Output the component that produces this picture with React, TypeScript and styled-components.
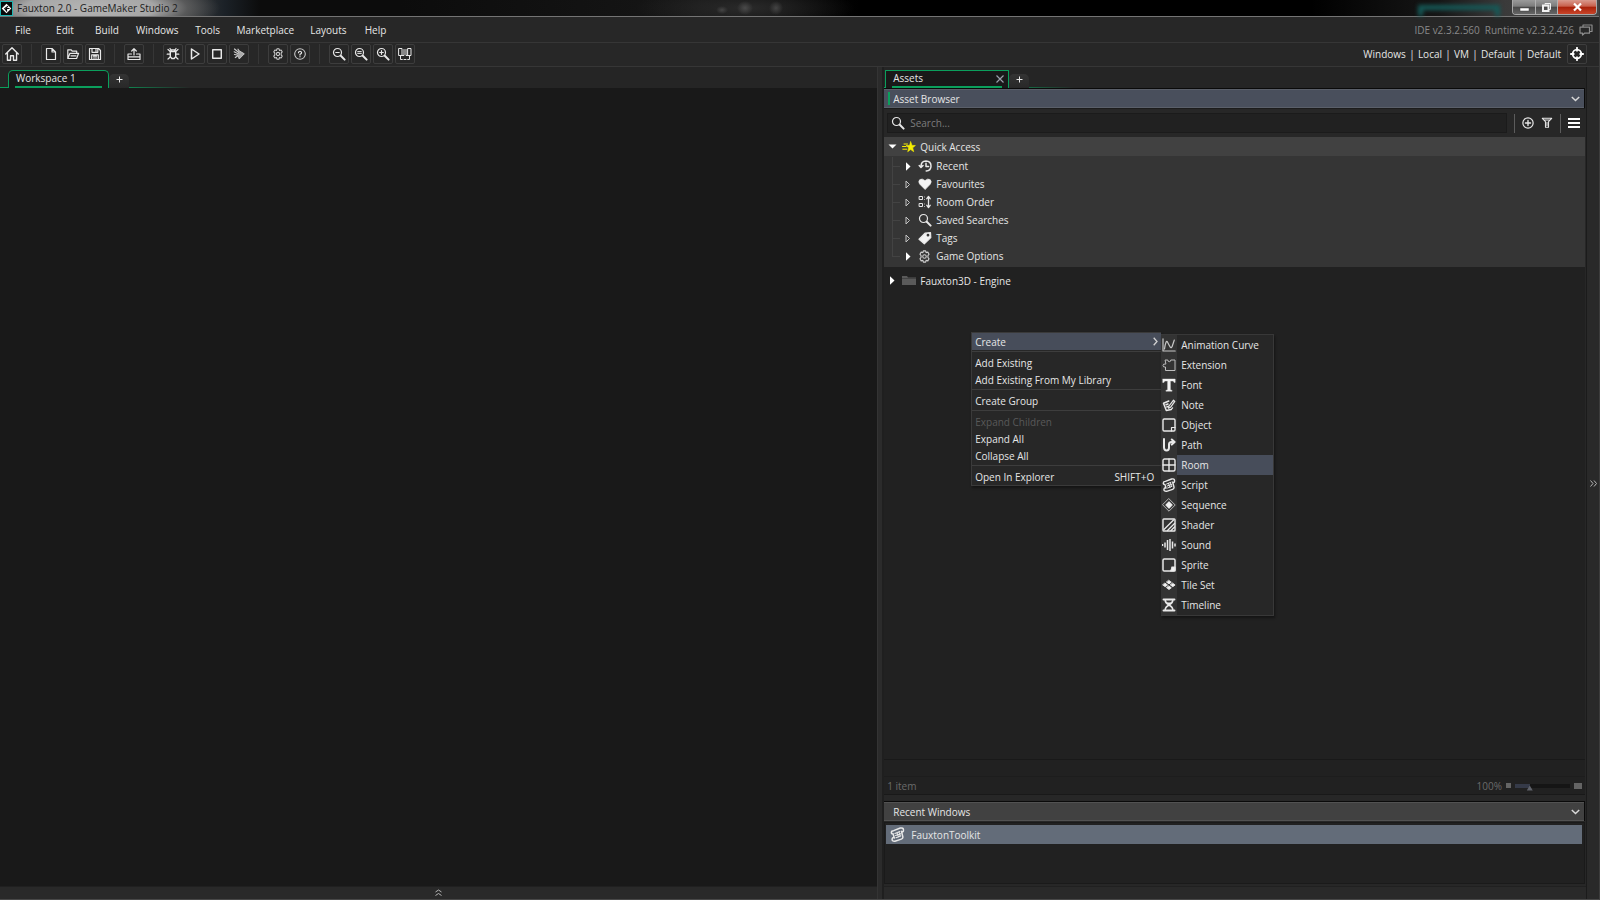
import React from "react";
import styled, { createGlobalStyle, css } from "styled-components";

const GlobalStyle = createGlobalStyle`
  * { box-sizing: border-box; }
  html, body { margin: 0; background: #272727; }
  body, button, input {
    font-family: "Open Sans", "Noto Sans", sans-serif;
    font-size: 10px;
    line-height: 14px;
    color: #e6e6e6;
  }
  button { margin: 0; padding: 0; border: 0; background: none; text-align: left; white-space: nowrap; }
  svg { display: block; flex: none; }
`;

const green = "#0b9f5c";

const Shell = styled.div`
  min-height: 100vh;
  display: flex;
  flex-direction: column;
  background: #272727;
  border-right: 1px solid #3c3c3c;
  border-bottom: 1px solid #484848;
  overflow: hidden;
`;

/* ---------- title bar ---------- */

const TitleBar = styled.header`
  height: 17px;
  display: flex;
  align-items: center;
  gap: 4px;
  padding-right: 2px;
  border-bottom: 1px solid #747474;
  background:
    radial-gradient(ellipse 130px 30px at 90px 8px, #b4b4b4 0%, #a6a6a6 50%, rgba(110, 110, 110, 0.6) 75%, transparent 100%),
    radial-gradient(ellipse 6px 4px at 722px 10px, #444, transparent),
    radial-gradient(ellipse 8px 7px at 745px 8px, #4a4a4a, transparent),
    radial-gradient(ellipse 7px 7px at 776px 8px, #444, transparent),
    radial-gradient(ellipse 110px 22px at 745px 8px, #2a2a2a, transparent),
    linear-gradient(90deg, #666 0, #444 170px, #1b2127 225px, #0c0c0c 260px, #0c0c0c 400px, #161616 700px, #000 860px, #000 82%, #161616 90%, #3a3a3a 94%, #444 100%);
`;
const TitleText = styled.h1`
  margin: 0;
  flex: 1;
  font-size: 10px;
  line-height: 16px;
  font-weight: 400;
  color: #1c1c1c;
`;
const TealGlow = styled.div`
  align-self: flex-end;
  width: 82px;
  height: 11px;
  margin-right: 8px;
  border: 5px solid #155a58;
  border-bottom: 0;
  filter: blur(2px);
`;
const WindowButtons = styled.div`
  align-self: flex-start;
  display: flex;
  height: 15px;
  border: 1px solid #a9a9a9;
  border-top: 0;
  border-radius: 0 0 4px 4px;
  overflow: hidden;
`;
const WindowButton = styled.button<{ $wide?: boolean; $close?: boolean }>`
  width: ${(p) => (p.$wide ? 39 : 22)}px;
  display: grid;
  place-items: center;
  background: ${(p) =>
    p.$close
      ? "linear-gradient(#d99a8d 0, #c8604c 45%, #a82008 50%, #c8452a 100%)"
      : "linear-gradient(#9a9a9a 0, #7c7c7c 45%, #484848 50%, #666 100%)"};
  & + & { border-left: 1px solid #b0b0b0; }
`;

/* ---------- menu and tool bars ---------- */

const Bar = styled.div<{ $h: number; $lift?: boolean }>`
  height: ${(p) => p.$h}px;
  display: flex;
  align-items: center;
  padding-left: 2px;
  padding-bottom: ${(p) => (p.$lift ? 1 : 0)}px;
  border-bottom: 1px solid #363636;
  background: #272727;
`;
const MenuButton = styled.button`
  min-width: 42px;
  padding: 0 8px;
  text-align: center;
`;
const Push = styled.div<{ $gap: number; $end: number }>`
  margin-left: auto;
  display: flex;
  align-items: center;
  gap: ${(p) => p.$gap}px;
  padding-right: ${(p) => p.$end}px;
`;
const Version = styled.span`
  color: #898989;
`;
const Pipe = styled.span`
  width: 6px;
  text-align: center;
`;
const ToolGroup = styled.div`
  display: flex;
  gap: 2px;
  & + & { margin-left: 9px; padding-left: 9px; border-left: 1px solid #363636; }
`;
const ToolButton = styled.button`
  width: 20px;
  height: 20px;
  display: grid;
  place-items: center;
  border: 1px solid #3d3d3d;
  border-radius: 2px;
`;
const TargetButton = styled(ToolButton)`
  margin-left: 3px;
`;

/* ---------- docking area ---------- */

const Main = styled.main`
  flex: 1;
  display: grid;
  grid-template-columns: minmax(0, 5fr) 7px minmax(0, 4fr) 13px;
`;
const Workspace = styled.section`
  display: flex;
  flex-direction: column;
  background: #191919;
`;
const Splitter = styled.div`
  background: #2b2b2b;
  border-left: 1px solid #343434;
  border-right: 2px solid #1f1f1f;
`;
const Strip = styled.div<{ $side?: boolean }>`
  display: grid;
  place-items: center;
  background: #292929;
  ${(p) =>
    p.$side
      ? css`border-left: 1px solid #1b1b1b;`
      : css`height: 13px; padding-bottom: 2px; border-top: 1px solid #202020;`}
`;
const IconButton = styled.button`
  display: grid;
  place-items: center;
`;
const Tabs = styled.div<{ $inset: number }>`
  height: 21px;
  display: flex;
  align-items: flex-end;
  padding-left: ${(p) => p.$inset}px;
  background:
    linear-gradient(90deg, ${green} 0, ${green} 110px, transparent 190px) bottom left / 100% 1px no-repeat,
    #252525;
`;
const Tab = styled.div<{ $w: number; $round: number }>`
  width: ${(p) => p.$w}px;
  height: 18px;
  display: flex;
  align-items: flex-start;
  justify-content: space-between;
  padding: 0 4px 0 7px;
  border: 1px solid ${green};
  border-bottom: 0;
  border-radius: ${(p) => p.$round}px ${(p) => p.$round}px 0 0;
  background: linear-gradient(${green}, ${green}) 6px 100% / calc(100% - 12px) 2px no-repeat, #191919;
`;
const TabName = styled.button`
  line-height: 15px;
`;
const TabClose = styled(IconButton)`
  height: 15px;
`;
const AddTab = styled.button`
  width: 20px;
  height: 14px;
  padding-bottom: 3px;
  display: grid;
  place-items: center;
  background: linear-gradient(#333, #282828);
  border-radius: 5px 5px 0 0;
`;

/* ---------- asset panel ---------- */

const Side = styled.aside`
  position: relative;
  display: flex;
  flex-direction: column;
  background: #272727;
`;
const SectionHeader = styled.button<{ $active?: boolean }>`
  height: 20px;
  display: flex;
  align-items: center;
  gap: 3px;
  margin-right: 1px;
  padding: 0 4px;
  border: 1px solid #0a0a0a;
  border-width: 1px 1px 0 0;
  background: ${(p) => (p.$active ? "#494f5c" : "#414141")};
  box-shadow: inset 0 1px 0 ${(p) => (p.$active ? "#5a5f69" : "#525252")}, inset 0 -1px 0 ${(p) => (p.$active ? "#5a5f69" : "#525252")};
`;
const ActiveMark = styled.span<{ $on?: boolean }>`
  width: 2px;
  height: 13px;
  background: ${(p) => (p.$on ? green : "transparent")};
`;
const Grow = styled.span`
  flex: 1;
`;
const SearchRow = styled.div`
  height: 29px;
  display: flex;
  align-items: center;
  gap: 7px;
  margin-right: 1px;
  padding: 0 5px 0 3px;
  border-top: 1px solid #1c1c1c;
`;
const SearchBox = styled.label`
  flex: 1;
  height: 20px;
  display: flex;
  align-items: center;
  gap: 5px;
  padding-left: 3px;
  background: #212121;
  border: 1px solid #1b1b1b;
`;
const SearchInput = styled.input`
  flex: 1;
  min-width: 0;
  padding: 0;
  border: 0;
  outline: 0;
  background: none;
  &::placeholder { color: #7d7d7d; opacity: 1; }
`;
const Rule = styled.span`
  width: 1px;
  height: 19px;
  background: #5c5c5c;
`;
const Tree = styled.div`
  flex: 1;
  margin-right: 1px;
  background: #212121;
  border-bottom: 1px solid #191919;
`;
const TreeRow = styled.button<{ $lit?: boolean }>`
  width: 100%;
  height: 19px;
  display: grid;
  grid-template-columns: 10px 14px auto;
  justify-content: start;
  align-items: center;
  column-gap: 4px;
  padding-left: 4px;
  background: ${(p) => (p.$lit ? "#414141" : "none")};
`;
const Branch = styled.div`
  margin-bottom: 4px;
  padding: 1px 0 2px 8px;
  background: #353535;
`;
const Leaf = styled.button`
  width: 100%;
  height: 18px;
  display: grid;
  grid-template-columns: 8px 10px 14px auto;
  justify-content: start;
  align-items: center;
  column-gap: 4px;
  background: linear-gradient(#434343, #434343) 0 0 / 1px 100% no-repeat;
  &:last-child { background-size: 1px 9px; }
`;
const Twig = styled.span`
  height: 1px;
  background: #434343;
`;
const Spacer = styled.div`
  height: 17px;
  margin-right: 1px;
  background: #212121;
  border-bottom: 1px solid #1d1d1d;
`;
const StatusBar = styled.div`
  height: 18px;
  display: flex;
  align-items: center;
  gap: 4px;
  margin: 0 1px 6px 0;
  padding: 0 3px;
  background: #212121;
  border-bottom: 1px solid #191919;
`;
const Dim = styled.span<{ $fill?: boolean }>`
  flex: ${(p) => (p.$fill ? 1 : "none")};
  color: #6b6b6b;
`;
const Box = styled.span<{ $w: number; $h: number }>`
  width: ${(p) => p.$w}px;
  height: ${(p) => p.$h}px;
  background: #646464;
`;
const Zoom = styled.input`
  width: 55px;
  height: 10px;
  margin: 0;
  appearance: none;
  background: linear-gradient(90deg, #353a48 15px, #151515 15px) 0 3px / 100% 4px no-repeat;
  &::-webkit-slider-thumb {
    appearance: none;
    width: 6px;
    height: 5px;
    margin-top: 5px;
    background: #60636b;
    clip-path: polygon(50% 0, 100% 100%, 0 100%);
  }
`;
const RecentList = styled.div`
  height: 62px;
  margin: 1px 1px 2px 0;
  padding: 2px 2px 2px 1px;
  background: #212121;
  border: 1px solid #1a1a1a;
`;
const RecentItem = styled.button`
  width: 100%;
  height: 19px;
  display: flex;
  align-items: center;
  gap: 6px;
  padding-left: 4px;
  background: #636c79;
`;

/* ---------- context menus ---------- */

const Popup = styled.div`
  position: absolute;
  left: 87px;
  top: 265px;
  display: flex;
  align-items: flex-start;
`;
const Menu = styled.div`
  width: 190px;
  background: #272727;
  border: 1px solid #3a3a3a;
  border-right: 0;
  box-shadow: 1px 2px 2px #151515;
`;
const MenuItem = styled.button<{ $lit?: boolean }>`
  width: 100%;
  height: 17px;
  display: flex;
  align-items: center;
  justify-content: space-between;
  padding: 0 ${(p) => (p.$lit ? 3 : 7)}px 0 3px;
  background: ${(p) => (p.$lit ? "#474d5a" : "none")};
  &:disabled { color: #595959; }
`;
const Divider = styled.hr`
  height: 1px;
  margin: 1px 0 2px;
  border: 0;
  background: #3d3d3d;
`;
const SubMenu = styled.div`
  width: 113px;
  margin-top: 2px;
  background: linear-gradient(90deg, #333 16px, #272727 16px);
  border: 1px solid #383838;
  border-left: 0;
  box-shadow: 1px 2px 2px #151515;
`;
const SubItem = styled.button`
  width: 100%;
  height: 20px;
  display: grid;
  grid-template-columns: 14px 1fr;
  column-gap: 1px;
  align-items: center;
  padding-left: 1px;
`;
const SubName = styled.span<{ $lit?: boolean }>`
  padding-left: 4px;
  line-height: 20px;
  background: ${(p) => (p.$lit ? "#474d5a" : "none")};
`;

/* ---------- drawings ---------- */

type SvgProps = { children: React.ReactNode; size?: number; sw?: number; color?: string };
const Svg = ({ children, size = 14, sw = 1.2, color = "#e8e8e8" }: SvgProps) => (
  <svg width={size} height={size} viewBox="0 0 14 14" fill="none" stroke={color} strokeWidth={sw} strokeLinejoin="round" strokeLinecap="round" aria-hidden="true">
    {children}
  </svg>
);

const f = "#f4f4f4";
const gear = (
  <>
    <path d="M5.800 1h2.400l.5 1.800 1.900-.5 1.300 2.200L10.700 6v2l1.200 1.500-1.300 2.200-1.900-.5L8.200 13H5.800l-.5-1.800-1.900.5L2.100 9.500 3.300 8V6L2.100 4.500l1.300-2.200 1.900.5z" stroke="#cfcfcf" />
    <circle cx="7" cy="7" r="1.900" stroke="#cfcfcf" />
  </>
);
const lens = (
  <>
    <circle cx="5.500" cy="5.500" r="4" />
    <path d="M8.800 8.800L12.600 12.600" strokeWidth="2" />
  </>
);
const scroll = (
  <>
    <path d="M3.400 3.400L9.600 1Q12.600 .4 12.600 2.800T10.700 4L12 9.200Q12.200 10.800 10.600 11.300L4.600 13.300Q1.600 13.400 2 11.200T4 10.200L2.900 6.400Q1.200 6.600 1.300 5T3.400 3.400z" strokeWidth="1.400" />
    <path d="M4.600 6l4.500-1.800M5.200 8l4.800-1.800M5.600 10l4.400-1.700M6.500 5.400l1.500 4M8.500 5l1 3.500" strokeWidth="1" />
  </>
);

const icons: Record<string, React.ReactNode> = {
  Home: <path d="M1.500 7L7 1.500 12.500 7M3 6v6.500h2.700V8.500h2.600v4H11V6" />,
  "New project": <path d="M2.500 1.500h5.500l3.500 3.500v7.500h-9zM8 1.700V5h3.300" />,
  "Open project": <path d="M1.800 11.500V2.800h3.400l1 1.400h4.500v2M1.800 11.500L4 6.300h8.600l-2 5.200zM5 8.800h5" />,
  "Save project": (
    <>
      <path d="M1.500 1.500h9l2 2v9h-11zM4 2v3.300h5.800V2M3.700 12V7.800h6.600V12M5.500 9.200h3M5.500 11h3" />
      <path d="M8 2.500v2" />
    </>
  ),
  "Create executable": <path d="M1 7v5.500h12V7H9.500M1 7h3.500M1 9.800h12M7 8V2M4.700 4L7 1.600 9.300 4" />,
  Debug: (
    <>
      <path d="M4.300 4.600h5.400v5L8.200 11.500H5.800L4.300 9.600zM4.300 4.600L5.500 3h3l1.200 1.600" strokeWidth="1.400" />
      <path d="M1.200 7.200h2.600M10.200 7.200h2.600M2 2.500l2.300 2M12 2.500l-2.300 2M2 12l2.300-2M12 12l-2.300-2M4 1.500l1 1.500M10 1.500L9 3" />
    </>
  ),
  Run: <path d="M3.500 2v10l7.500-5z" strokeWidth="1.500" />,
  Stop: <rect x="2" y="2" width="10" height="10" strokeWidth="1.700" />,
  Clean: (
    <>
      <path d="M7.500 4L12.300 6.800 7.200 12 6 8.500z" fill="#aaa" stroke="#ccc" strokeWidth=".9" />
      <path d="M2.500 2l4 3.200M2.200 4.800l3.300 1.700M2.500 7.500l2.800.5M3.300 10.500l2.200-1.500M6 2.200l.8 1.300" stroke="#ccc" />
    </>
  ),
  Settings: gear,
  Help: (
    <>
      <circle cx="7" cy="7" r="6.200" stroke="#cfcfcf" />
      <path d="M5.200 5.500Q5.400 3.800 7 3.800T8.800 5.400Q8.800 6.400 7 7.400v.8M7 10v.3" strokeWidth="1.400" />
    </>
  ),
  "Zoom out": <>{lens}<path d="M3.800 5.500h3.400" /></>,
  "Reset zoom": <>{lens}<path d="M3.700 4.600h3.600M3.700 6.400h3.600" strokeWidth="1" /></>,
  "Zoom in": <>{lens}<path d="M3.700 5.500h3.600M5.500 3.700v3.600" /></>,
  Dock: <path d="M1 1.500h3v7H1zM10 1.500h3v7h-3zM4 8.500h2v-6M10 8.500H8v-6M2.500 9v3.500h1.800M11.500 9v3.500H9.700M6 12.500h2" strokeWidth="1" />,
  Recent: <path d="M1.200 6.500l1.800 2 2-2M3 8Q2.800 2 8 2q5 .3 5 5t-4.800 5M8 4.200V7.500h2.600" strokeWidth="1.500" />,
  Favourites: <path d="M7 12.500L1.500 7Q-.2 4.500 1.800 2.600 4.300 .8 7 3.600 9.700 .8 12.200 2.600 14.200 4.500 12.500 7z" fill={f} strokeWidth="0.500" />,
  "Room Order": (
    <>
      <path d="M1.500 1.500h3v3h-3zM1.500 8.500h3v3h-3z" strokeWidth="1" />
      <path d="M6.500 1.500v1M6.500 4v1M6.500 8.500v1M6.500 11v1" strokeWidth="1" stroke="#aaa" strokeLinecap="butt" />
      <path d="M10.500 2v10M8.800 3.700l1.700-2.200 1.700 2.200M8.800 10.300l1.700 2.200 1.700-2.200" strokeWidth="1.300" />
    </>
  ),
  "Saved Searches": lens,
  Tags: (
    <>
      <path d="M1 8.200L7 2.200 12.500 1.500 12.800 6.500 6.300 12.800z" fill={f} />
      <circle cx="10" cy="4.200" r=".8" fill="#353535" stroke="#353535" />
    </>
  ),
  "Game Options": gear,
  "Animation Curve": <path d="M1 .8V13H13.200M2.500 11Q4 1 5.600 4.200T8.300 9.200Q9.600 10.800 10.800 6.500L12.300 2" stroke="#c8c8c8" />,
  Extension: <path d="M3.500 2h2.300q0 1.700 1.500 1.700T8.800 2H13v10.500H3.500V9Q1 9.500 1 7.500T3.500 6z" stroke="#bdbdbd" strokeWidth="1" />,
  Font: <path d="M.8 1h12.400v3.400h-1.200l-.7-1.300H8.400v8.700l1.700.6v.8H3.900v-.8l1.700-.6V3.100H2.700L2 4.400H.8z" fill={f} strokeWidth=".4" />,
  Note: (
    <>
      <path d="M6.800 3L1.500 5.300 4.300 12.600 9.300 11.400M4 6.800l2-.8M4.800 9l1.500-.6" strokeWidth="1.500" />
      <path d="M7 8L11.500 2.200 12.800 3.400 8.500 9.300 6.500 10.200zM9.300 11.400l1.300-1.600" strokeWidth="1.200" />
    </>
  ),
  Object: <><rect x="1" y="1" width="12" height="12" rx="1.200" strokeWidth="1.400" /><path d="M13 9.500H9.500V13" /></>,
  Path: <path d="M2 1v8.500Q2.200 12.500 4.600 12.500T7 9.500V6.500Q7 4 9.500 4h2.800M9.800 1.500L12.600 4 9.800 6.600" strokeWidth="2" />,
  Room: <><rect x="1" y="1" width="12" height="12" rx="1.500" strokeWidth="1.400" /><path d="M7 1v12M1 7h12" strokeWidth="1.400" /></>,
  Script: scroll,
  Sequence: <><path d="M7 .8L13.200 7 7 13.200 .8 7z" strokeWidth="1" stroke="#b8b8b8" /><path d="M7 4L10 7 7 10 4 7z" fill={f} /></>,
  Shader: <><rect x="1" y="1" width="12" height="12" rx=".8" strokeWidth="1.400" /><path d="M2 11.500L11.500 2M5.500 12.500l7-7M9 12.500l3.500-3.500" strokeWidth="1.300" /></>,
  Sound: <path d="M.5 6v2M3 4.500v5M5.500 2v10M8 1v12M10.500 3.500v7M13 5.500v3" strokeWidth="1.500" strokeLinecap="butt" />,
  Sprite: <><rect x="1" y="1" width="12" height="12" rx="1.300" strokeWidth="1.500" /><path d="M13 9H9.800v1.300L8.700 13H13z" fill={f} /></>,
  "Tile Set": <path d="M7 2.500l2.300 1.700L7 5.900 4.700 4.200zM7 8.100l2.300 1.700L7 11.500 4.700 9.800zM3.200 5.300L5.500 7 3.200 8.700 .9 7zM10.800 5.300L13.100 7l-2.300 1.700L8.500 7z" fill={f} strokeWidth=".9" />,
  Timeline: <><path d="M1.500 1.500h11M1.500 12.500h11" strokeWidth="1.900" /><path d="M3.200 2Q3.200 5 7 7 3.200 9 3.200 12M10.800 2Q10.800 5 7 7q3.800 2 3.800 5" strokeWidth="1.600" /><path d="M4.500 4.500h5L7 6.500z" fill={f} stroke="none" /></>,
};

const sizes: Record<string, number> = { Home: 16, Settings: 12, Help: 12, Stop: 12 };

const Arrow = ({ kind }: { kind: "down" | "right" | "hollow" }) => (
  <svg width="9" height="9" viewBox="0 0 9 9" aria-hidden="true">
    {kind === "down" && <path d="M.5 2.500h8L4.500 6.500z" fill="#fff" />}
    {kind === "right" && <path d="M2 .3v8.400L6.500 4.500z" fill="#fff" />}
    {kind === "hollow" && <path d="M2 1v7L5.500 4.500z" fill="none" stroke="#c4c4c4" />}
  </svg>
);
const Chevron = () => (
  <svg width="9" height="6" viewBox="0 0 9 6" fill="none" stroke="#d8d8d8" strokeWidth="1.500" aria-hidden="true">
    <path d="M.8 1L4.500 4.500 8.200 1" />
  </svg>
);
const Plus = () => (
  <svg width="7" height="7" viewBox="0 0 7 7" stroke="#e8e8e8" aria-hidden="true">
    <path d="M3.500.5v6M.5 3.500h6" />
  </svg>
);
const Logo = () => (
  <svg width="13" height="15" viewBox="0 0 13 15" aria-hidden="true">
    <rect x=".5" y=".5" width="12" height="14" fill="#0a0a0a" stroke="#1fb5b2" />
    <path d="M6.500 2.800L11.300 7.500 6.500 12.200 1.700 7.500z" fill="#fff" />
    <path d="M8 5.200L4.800 7.500 6.500 9.600V7.500h3" fill="none" stroke="#0a0a0a" strokeWidth="1.200" />
  </svg>
);

/* ---------- data ---------- */

const menus = ["File", "Edit", "Build", "Windows", "Tools", "Marketplace", "Layouts", "Help"];
const tools = [
  ["Home"],
  ["New project", "Open project", "Save project"],
  ["Create executable"],
  ["Debug", "Run", "Stop", "Clean"],
  ["Settings", "Help"],
  ["Zoom out", "Reset zoom", "Zoom in", "Dock"],
];
const targets = ["Windows", "Local", "VM", "Default", "Default"];
const quickAccess: { name: string; filled?: boolean }[] = [
  { name: "Recent", filled: true },
  { name: "Favourites" },
  { name: "Room Order" },
  { name: "Saved Searches" },
  { name: "Tags" },
  { name: "Game Options", filled: true },
];
const resources = ["Animation Curve", "Extension", "Font", "Note", "Object", "Path", "Room", "Script", "Sequence", "Shader", "Sound", "Sprite", "Tile Set", "Timeline"];

export default function App() {
  return (
    <>
      <GlobalStyle />
      <Shell>
        <TitleBar>
          <Logo />
          <TitleText>Fauxton 2.0 - GameMaker Studio 2</TitleText>
          <TealGlow />
          <WindowButtons>
            <WindowButton aria-label="Minimize">
              <svg width="11" height="12" viewBox="0 0 11 12"><rect x="1" y="7" width="9" height="3" fill="#fff" stroke="#444" strokeWidth=".5" /></svg>
            </WindowButton>
            <WindowButton aria-label="Restore">
              <svg width="11" height="11" viewBox="0 0 11 11" fill="none" stroke="#f2f2f2"><path d="M4 2.500v-1h5.500v6h-1.500" /><rect x="2" y="3.500" width="5.500" height="5.500" strokeWidth="2" /></svg>
            </WindowButton>
            <WindowButton aria-label="Close" $wide $close>
              <svg width="11" height="10" viewBox="0 0 11 10" fill="none" stroke="#fff" strokeWidth="2.200"><path d="M2 1.500l7 7M9 1.500l-7 7" /></svg>
            </WindowButton>
          </WindowButtons>
        </TitleBar>

        <Bar as="nav" $h={26}>
          {menus.map((m) => <MenuButton key={m}>{m}</MenuButton>)}
          <Push $gap={5} $end={6}>
            <Version>IDE v2.3.2.560</Version>
            <Version>Runtime v2.3.2.426</Version>
            <IconButton aria-label="Notifications">
              <Svg color="#8c8c8c"><path d="M4 3.500V2h9v6.500h-2M1 4.200h9.500v6H5.500L3.500 12v-1.800H1z" /></Svg>
            </IconButton>
          </Push>
        </Bar>

        <Bar $h={24} $lift>
          {tools.map((group) => (
            <ToolGroup key={group[0]}>
              {group.map((t) => (
                <ToolButton key={t} aria-label={t}><Svg size={sizes[t] ?? 14}>{icons[t]}</Svg></ToolButton>
              ))}
            </ToolGroup>
          ))}
          <Push $gap={3} $end={12}>
            {targets.map((t, i) => (
              <React.Fragment key={i}>
                {i > 0 && <Pipe>|</Pipe>}
                <button>{t}</button>
              </React.Fragment>
            ))}
            <TargetButton aria-label="Target manager">
              <Svg sw={1.8} color="#fff"><circle cx="7" cy="7" r="4.300" /><path d="M7 .8v3M7 10.200v3M.8 7h3M10.200 7h3" /></Svg>
            </TargetButton>
          </Push>
        </Bar>

        <Main>
          <Workspace>
            <Tabs $inset={8}>
              <Tab $w={101} $round={5}><TabName>Workspace 1</TabName></Tab>
              <AddTab aria-label="Add workspace"><Plus /></AddTab>
            </Tabs>
            <Grow />
            <Strip>
              <IconButton aria-label="Show output">
                <svg width="7" height="7" viewBox="0 0 7 7" fill="none" stroke="#b4b4b4"><path d="M.5 3l3-2 3 2M.5 6.500l3-2 3 2" /></svg>
              </IconButton>
            </Strip>
          </Workspace>

          <Splitter />

          <Side>
            <Tabs $inset={1}>
              <Tab $w={124} $round={1}>
                <TabName>Assets</TabName>
                <TabClose aria-label="Close Assets">
                  <svg width="8" height="8" viewBox="0 0 8 8" stroke="#9a9fab" strokeWidth="1.200"><path d="M.5.5l7 7M7.500.5l-7 7" /></svg>
                </TabClose>
              </Tab>
              <AddTab aria-label="Add tab"><Plus /></AddTab>
            </Tabs>
            <SectionHeader $active>
              <ActiveMark $on />
              <Grow>Asset Browser</Grow>
              <Chevron />
            </SectionHeader>
            <SearchRow>
              <SearchBox>
                <Svg>{lens}</Svg>
                <SearchInput type="text" placeholder="Search..." aria-label="Search assets" />
              </SearchBox>
              <Rule />
              <IconButton aria-label="Add asset">
                <Svg size={12} sw={1.4}><circle cx="7" cy="7" r="6" /><path d="M7 4v6M4 7h6" strokeWidth="1.600" /></Svg>
              </IconButton>
              <IconButton aria-label="Filter">
                <Svg size={12}><path d="M1.500 1.500h11L8.800 5.500v6.500H5.200V5.500zM4 3.500h6M7 6v4" /></Svg>
              </IconButton>
              <Rule />
              <IconButton aria-label="Browser menu">
                <svg width="12" height="10" viewBox="0 0 12 10" fill="#fff"><path d="M0 0h12v2H0zM0 4h12v2H0zM0 8h12v2H0z" /></svg>
              </IconButton>
            </SearchRow>
            <Tree>
              <TreeRow $lit>
                <Arrow kind="down" />
                <Svg color="#f6ef00"><path d="M8.700 1.800L10 5.400l3.400.1-2.700 2.300 1 3.900-3-2.200-3 2.200 1-3.900L4 5.500l3.400-.1z" fill="#f6ef00" strokeWidth=".6" /><path d="M2 4h3.500M.5 6.500h3.500M.8 9.200h4" strokeWidth="1" /></Svg>
                <span>Quick Access</span>
              </TreeRow>
              <Branch>
                {quickAccess.map((q) => (
                  <Leaf key={q.name}>
                    <Twig />
                    <Arrow kind={q.filled ? "right" : "hollow"} />
                    <Svg size={q.name === "Game Options" ? 13 : 14}>{icons[q.name]}</Svg>
                    <span>{q.name}</span>
                  </Leaf>
                ))}
              </Branch>
              <TreeRow>
                <Arrow kind="right" />
                <svg width="14" height="9" viewBox="0 0 14 9"><path d="M0 0h5l1 1.500h8V9H0z" fill="#5a5a5a" /><path d="M0 2.500h14" stroke="#444" /></svg>
                <span>Fauxton3D - Engine</span>
              </TreeRow>
            </Tree>
            <Spacer />
            <StatusBar>
              <Dim $fill>1 item</Dim>
              <Dim>100%</Dim>
              <Box $w={5} $h={5} />
              <Zoom type="range" min={0} max={100} defaultValue={24} aria-label="Zoom level" />
              <Box $w={8} $h={6} />
            </StatusBar>
            <SectionHeader>
              <ActiveMark />
              <Grow>Recent Windows</Grow>
              <Chevron />
            </SectionHeader>
            <RecentList>
              <RecentItem><Svg size={15}>{scroll}</Svg>FauxtonToolkit</RecentItem>
            </RecentList>
            <Strip />

            <Popup>
              <Menu>
                <MenuItem $lit>
                  Create
                  <svg width="5" height="9" viewBox="0 0 5 9" fill="none" stroke="#d0d0d0" strokeWidth="1.300"><path d="M.7.8l3.300 3.700L.7 8.200" /></svg>
                </MenuItem>
                <Divider />
                <MenuItem>Add Existing</MenuItem>
                <MenuItem>Add Existing From My Library</MenuItem>
                <Divider />
                <MenuItem>Create Group</MenuItem>
                <Divider />
                <MenuItem disabled>Expand Children</MenuItem>
                <MenuItem>Expand All</MenuItem>
                <MenuItem>Collapse All</MenuItem>
                <Divider />
                <MenuItem>Open In Explorer<span>SHIFT+O</span></MenuItem>
              </Menu>
              <SubMenu>
                {resources.map((r) => (
                  <SubItem key={r}>
                    <Svg>{icons[r]}</Svg>
                    <SubName $lit={r === "Room"}>{r}</SubName>
                  </SubItem>
                ))}
              </SubMenu>
            </Popup>
          </Side>

          <Strip $side>
            <IconButton aria-label="Show side dock">
              <svg width="7" height="7" viewBox="0 0 7 7" fill="none" stroke="#b4b4b4"><path d="M.5.5l2.500 3-2.500 3M4 .5l2.500 3-2.500 3" /></svg>
            </IconButton>
          </Strip>
        </Main>
      </Shell>
    </>
  );
}
